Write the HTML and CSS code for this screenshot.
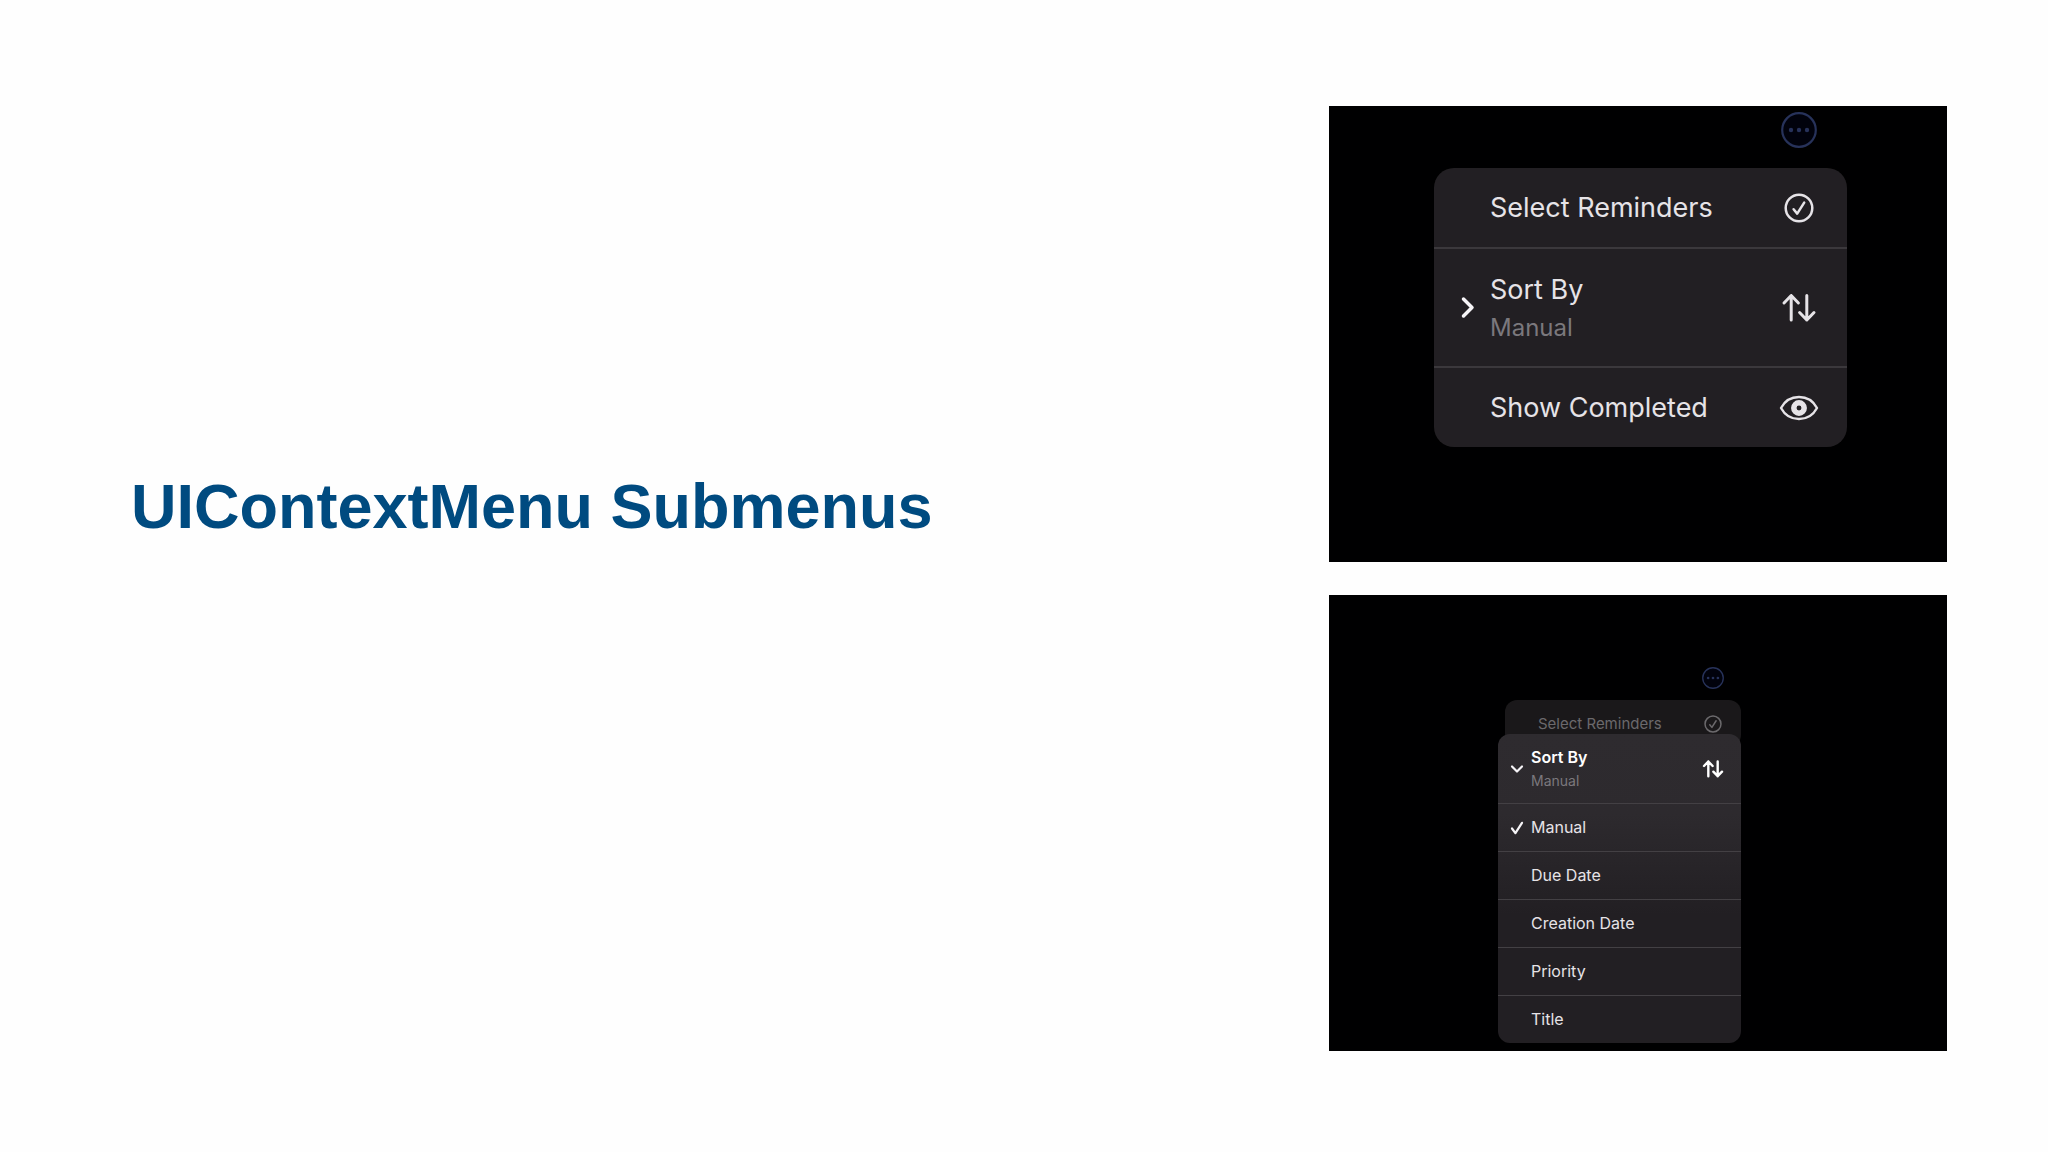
FILE: index.html
```html
<!DOCTYPE html>
<html lang="en">
<head>
<meta charset="utf-8">
<meta name="viewport" content="width=device-width, initial-scale=1">
<title>UIContextMenu Submenus</title>
<link rel="stylesheet" href="styles.css">
</head>
<body>
<svg class="sprite" aria-hidden="true">
  <symbol id="more" viewBox="0 0 36 36"><circle cx="18" cy="18" r="16.8" fill="#01020c" stroke="currentColor" stroke-width="2.2"/><g fill="currentColor"><circle cx="10" cy="18" r="2.2"/><circle cx="18" cy="18" r="2.2"/><circle cx="26" cy="18" r="2.2"/></g></symbol>
  <symbol id="check-circle" viewBox="0 0 40 40"><g fill="none" stroke="currentColor" stroke-linecap="round" stroke-linejoin="round"><circle cx="20" cy="20" r="13.3" stroke-width="2.5"/><path d="M14.6 21.2l3.6 4.4 7-11" stroke-width="2.5"/></g></symbol>
  <symbol id="sort" viewBox="0 0 40 40"><path d="M12.2 32V7.500M5 15l7.200-7.500L19.400 15M27.800 7.500V32M20.600 24.500l7.200 7.500 7.200-7.500" fill="none" stroke="currentColor" stroke-linecap="round" stroke-linejoin="round"/></symbol>
  <symbol id="eye" viewBox="0 0 40 40"><path d="M2 20C6 12.500 13 9 20 9s14 3.500 18 11c-4 7.500-11 11-18 11S6 27.500 2 20z" fill="none" stroke="currentColor" stroke-width="2.400" stroke-linejoin="round"/><circle cx="20" cy="20" r="5.200" fill="none" stroke="currentColor" stroke-width="5.500"/></symbol>
  <symbol id="chevron-right" viewBox="0 0 28 28"><path d="M9.500 5l8.500 8.500-8.500 8.500" fill="none" stroke="currentColor" stroke-width="3.500" stroke-linecap="round" stroke-linejoin="round"/></symbol>
  <symbol id="chevron-down" viewBox="0 0 16 16"><path d="M3 5.500l5 5 5-5" fill="none" stroke="currentColor" stroke-width="2.2" stroke-linecap="round" stroke-linejoin="round"/></symbol>
  <symbol id="check" viewBox="0 0 16 16"><path d="M3 8.500l3.400 4.700L13 2.800" fill="none" stroke="currentColor" stroke-width="2.2" stroke-linecap="round" stroke-linejoin="round"/></symbol>
</svg>

<main class="slide">
  <h1 class="slide-title">UIContextMenu Submenus</h1>

  <div class="shots">
    <section class="shot shot-large" aria-label="Context menu">
      <button class="more" type="button" aria-label="More"><svg><use href="#more"/></svg></button>
      <ul class="menu">
        <li><button class="item" type="button"><span class="label">Select Reminders</span><svg class="icon"><use href="#check-circle"/></svg></button></li>
        <li><button class="item item-sort" type="button"><svg class="mark"><use href="#chevron-right"/></svg><span class="label">Sort By<span class="detail">Manual</span></span><svg class="icon icon-sort"><use href="#sort"/></svg></button></li>
        <li><button class="item" type="button"><span class="label">Show Completed</span><svg class="icon"><use href="#eye"/></svg></button></li>
      </ul>
    </section>

    <section class="shot shot-small" aria-label="Submenu">
      <button class="more" type="button" aria-label="More"><svg><use href="#more"/></svg></button>
      <ul class="menu menu-behind">
        <li><button class="item" type="button"><span class="label">Select Reminders</span><svg class="icon"><use href="#check-circle"/></svg></button></li>
      </ul>
      <ul class="menu submenu">
        <li><button class="item item-sort" type="button"><svg class="mark"><use href="#chevron-down"/></svg><span class="label label-open">Sort By<span class="detail">Manual</span></span><svg class="icon icon-sort"><use href="#sort"/></svg></button></li>
        <li><button class="item" type="button"><svg class="mark"><use href="#check"/></svg><span class="label">Manual</span></button></li>
        <li><button class="item" type="button"><span class="label">Due Date</span></button></li>
        <li><button class="item" type="button"><span class="label">Creation Date</span></button></li>
        <li><button class="item" type="button"><span class="label">Priority</span></button></li>
        <li><button class="item" type="button"><span class="label">Title</span></button></li>
      </ul>
    </section>
  </div>
</main>
</body>
</html>
```
FILE: styles.css
```css
* {
  box-sizing: border-box;
}

body {
  margin: 0;
  background: #fefefe;
  font-family: Inter, "Liberation Sans", sans-serif;
}

.sprite {
  display: none;
}

.slide {
  display: grid;
  grid-template-columns: minmax(0, 1198fr) minmax(0, 618fr);
  align-items: start;
  padding: 106px 101px 100px 131px;
}

.slide-title {
  margin: 0;
  padding-top: 362px;
  color: #004b80;
  font: bold 63px/76px "Liberation Sans", Arial, sans-serif;
}

.shots {
  display: grid;
  gap: 33px;
}

.shot {
  display: flex;
  flex-direction: column;
  align-items: flex-end;
  min-height: 456px;
  background: #000001;
}

.more,
.item {
  margin: 0;
  border: 0;
  background: none;
  font: inherit;
  text-align: left;
  color: inherit;
}

.more {
  padding: 0;
  color: #27325a;
}

.more svg {
  display: block;
  width: 100%;
  height: 100%;
}

.menu {
  margin: 0;
  padding: 0;
  list-style: none;
  overflow: hidden;
  background: #221f23;
  color: #e6e3e7;
}

.menu li + li {
  border-top: 2px solid #3b383c;
}

.item {
  display: grid;
  align-items: center;
  width: 100%;
}

.mark {
  grid-column: 1;
  grid-row: 1;
  color: #f6f4f7;
}

.label {
  grid-column: 2;
  grid-row: 1;
}

.icon {
  grid-column: 3;
  grid-row: 1;
}

.icon-sort {
  stroke-width: 3px;
}

.detail {
  display: block;
  color: #7b787d;
  font-weight: 400;
}

/* Menu at full size */
.shot-large {
  padding: 6px 100px 0 0;
}

.shot-large .more {
  width: 36px;
  height: 36px;
  margin-right: 30px;
}

.shot-large .menu {
  width: 413px;
  margin-top: 20px;
  border-radius: 20px;
  font-size: 27px;
  line-height: 40px;
}

.shot-large .item {
  grid-template-columns: 28px 1fr 40px;
  column-gap: 8px;
  min-height: 79px;
  padding: 0 28px 0 20px;
}

.shot-large .item-sort {
  min-height: 117px;
}

.shot-large .mark {
  width: 28px;
  height: 28px;
}

.shot-large .icon {
  width: 40px;
  height: 40px;
}

.shot-large .detail {
  font-size: 24px;
  line-height: 36px;
}

/* Opened submenu, shown smaller */
.shot-small {
  padding: 72px 206px 8px 0;
}

.shot-small .more {
  width: 22px;
  height: 22px;
  margin-right: 17px;
}

.shot-small .menu {
  width: 243px;
  border-radius: 12px;
  font-size: 16px;
  line-height: 23px;
}

.shot-small .menu li + li {
  border-top: 1px solid #434044;
}

.shot-small .item {
  grid-template-columns: 16px 1fr 24px;
  column-gap: 6px;
  min-height: 47px;
  padding: 0 16px 0 11px;
}

.shot-small .item-sort {
  min-height: 69px;
}

.shot-small .mark {
  width: 16px;
  height: 16px;
}

.shot-small .icon {
  width: 24px;
  height: 24px;
}

.shot-small .icon-sort {
  stroke-width: 4px;
  color: #ffffff;
}

.shot-small .label-open {
  color: #ffffff;
  font-weight: 600;
}

.shot-small .detail {
  font-size: 14px;
}

.shot-small .menu-behind {
  width: 236px;
  margin-top: 11px;
  background: #1a181a;
  color: #6b696c;
  font-size: 15px;
}

.shot-small .submenu {
  position: relative;
  margin-top: -13px;
  background: linear-gradient(#2e2b2f 0, #2d2a2e 80px, #221f23 180px);
}
```
